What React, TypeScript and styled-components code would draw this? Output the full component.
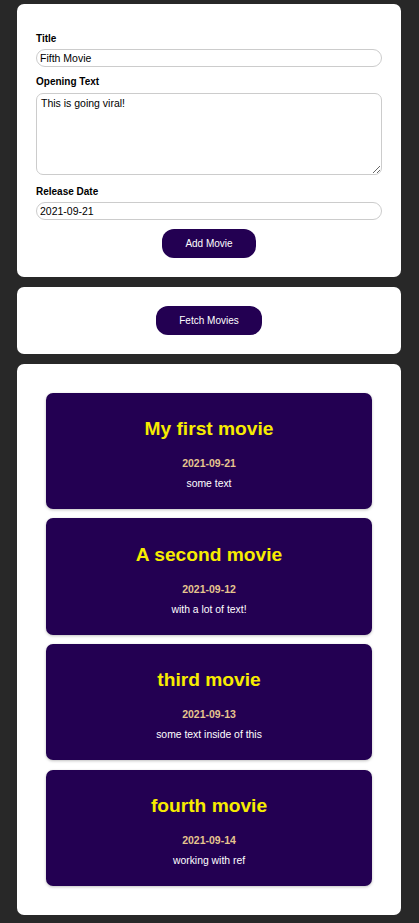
import React, { FC, useState } from 'react'
import styled, { createGlobalStyle } from 'styled-components'

const STYLE_PAGE_BG = '#282828'
const STYLE_PURPLE = '#230052'
const STYLE_TITLE_YELLOW = '#f7ec00'
const STYLE_DATE_TAN = '#e6c48e'
const STYLE_FIELD_BORDER = '#cccccc'

const GlobalStyle = createGlobalStyle`
  html, body {
    margin: 0;
    padding: 0;
    background-color: ${STYLE_PAGE_BG};
    font-family: "Liberation Sans", Arial, sans-serif;
  }
`

const Page = styled.div`
  display: flex;
  flex-direction: column;
  gap: 9.6px;
  width: 384px;
  margin: 4px 18px 0 17px;
`
const Section = styled.section<{ compact?: boolean }>`
  display: flex;
  flex-direction: column;
  padding: ${p => p.compact ? '19px' : '28.5px 19px 19px'};
  background-color: #fff;
  border-radius: 7px;
`
const ListSection = styled.section`
  padding: 19.6px 19.2px 20px;
  background-color: #fff;
  border-radius: 7px;
`
const Control = styled.div`
  display: flex;
  flex-direction: column;
  margin-bottom: 9.3px;
`
const Label = styled.label`
  margin-bottom: 4.5px;
  font-size: 10px;
  line-height: 12px;
  font-weight: bold;
  color: #000;
`
const Input = styled.input`
  box-sizing: border-box;
  height: 18px;
  padding: 0 3px;
  font: 10.5px "Liberation Sans", Arial, sans-serif;
  color: #000;
  border: 1px solid ${STYLE_FIELD_BORDER};
  border-radius: 9px;
  outline: none;
`
const TextArea = styled.textarea`
  box-sizing: border-box;
  height: 82.5px;
  margin-bottom: 1px;
  padding: 3px 4px;
  font: 10.5px "Liberation Sans", Arial, sans-serif;
  color: #000;
  border: 1px solid ${STYLE_FIELD_BORDER};
  border-radius: 7px;
  outline: none;
`
const Button = styled.button`
  align-self: center;
  height: 29px;
  padding: 0 23px;
  font: 10px "Liberation Sans", Arial, sans-serif;
  color: #fff;
  background-color: ${STYLE_PURPLE};
  border: none;
  border-radius: 12px;
  cursor: pointer;
`
const MovieList = styled.ul`
  list-style: none;
  margin: 0;
  padding: 0;
`
const MovieItem = styled.li`
  margin: 9.6px;
  padding: 9.6px;
  text-align: center;
  background-color: ${STYLE_PURPLE};
  border-radius: 7px;
  box-shadow: 0 1px 3px rgba(0, 0, 0, 0.25);
  color: #fff;
`
const MovieTitle = styled.h2`
  margin: 15.5px 0 17px;
  font-size: 19.2px;
  line-height: 22px;
  font-weight: bold;
  color: ${STYLE_TITLE_YELLOW};
`
const MovieDate = styled.h3`
  margin: 0 0 9px;
  font-size: 10.5px;
  line-height: 12px;
  font-weight: bold;
  color: ${STYLE_DATE_TAN};
`
const MovieText = styled.p`
  margin: 0 0 9.4px;
  font-size: 10.4px;
  line-height: 12px;
`

interface Movie {
  id: string;
  title: string;
  releaseDate: string;
  openingText: string;
}

const MOVIES: Movie[] = [
  { id: 'm1', title: 'My first movie', releaseDate: '2021-09-21', openingText: 'some text' },
  { id: 'm2', title: 'A second movie', releaseDate: '2021-09-12', openingText: 'with a lot of text!' },
  { id: 'm3', title: 'third movie', releaseDate: '2021-09-13', openingText: 'some text inside of this' },
  { id: 'm4', title: 'fourth movie', releaseDate: '2021-09-14', openingText: 'working with ref' },
]

const AddMovie: FC = () => {
  const [title, setTitle] = useState('Fifth Movie')
  const [openingText, setOpeningText] = useState('This is going viral!')
  const [date, setDate] = useState('2021-09-21')

  return (
    <Section as="form" onSubmit={e => e.preventDefault()}>
      <Control>
        <Label htmlFor="title">Title</Label>
        <Input id="title" type="text" value={title} onChange={e => setTitle(e.target.value)} />
      </Control>
      <Control>
        <Label htmlFor="opening-text">Opening Text</Label>
        <TextArea id="opening-text" rows={5} value={openingText} onChange={e => setOpeningText(e.target.value)} />
      </Control>
      <Control>
        <Label htmlFor="date">Release Date</Label>
        <Input id="date" type="text" value={date} onChange={e => setDate(e.target.value)} />
      </Control>
      <Button type="submit">Add Movie</Button>
    </Section>
  )
}

const App: FC = () => (
  <>
    <GlobalStyle />
    <Page>
      <AddMovie />
      <Section compact>
        <Button>Fetch Movies</Button>
      </Section>
      <ListSection>
        <MovieList>
          {MOVIES.map(movie => (
            <MovieItem key={movie.id}>
              <MovieTitle>{movie.title}</MovieTitle>
              <MovieDate>{movie.releaseDate}</MovieDate>
              <MovieText>{movie.openingText}</MovieText>
            </MovieItem>
          ))}
        </MovieList>
      </ListSection>
    </Page>
  </>
)

export default App
